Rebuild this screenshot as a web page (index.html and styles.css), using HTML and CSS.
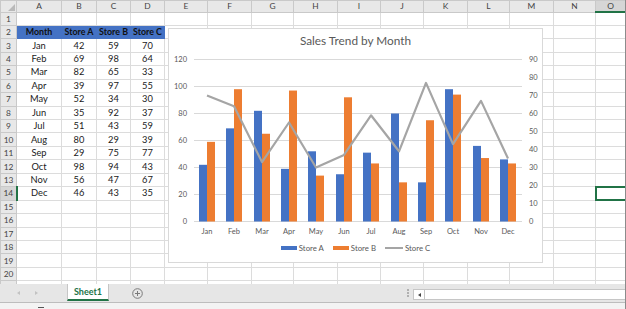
FILE: index.html
```html
<!DOCTYPE html>
<html lang="en">
<head>
    <title>Sales Trend by Month</title>
    <meta charset="utf-8">
    <link rel="stylesheet" href="styles.css">
</head>
<body>

    <div class="sheet">
        <div class="grid-wrap">
            <table class="grid">
                <colgroup>
                    <col class="col-head"><col class="col-a"><col class="col-b"><col class="col-c"><col class="col-d">
                    <col class="col-e"><col class="col-f"><col class="col-g"><col class="col-h"><col class="col-i">
                    <col class="col-j"><col class="col-k"><col class="col-l"><col class="col-m"><col class="col-n"><col class="col-o">
                </colgroup>
                <tr class="colhead">
                    <th class="corner"></th><th>A</th><th>B</th><th>C</th><th>D</th><th>E</th><th>F</th><th>G</th><th>H</th><th>I</th><th>J</th><th>K</th><th>L</th><th>M</th><th>N</th><th class="sel-col">O</th>
                </tr>
                <tr><th>1</th><td></td><td></td><td></td><td></td><td></td><td></td><td></td><td></td><td></td><td></td><td></td><td></td><td></td><td></td><td></td></tr>
                <tr><th>2</th><td class="hd">Month</td><td class="hd">Store A</td><td class="hd">Store B</td><td class="hd">Store C</td><td></td><td></td><td></td><td></td><td></td><td></td><td></td><td></td><td></td><td></td><td></td></tr>
                <tr><th>3</th><td>Jan</td><td>42</td><td>59</td><td>70</td><td></td><td></td><td></td><td></td><td></td><td></td><td></td><td></td><td></td><td></td><td></td></tr>
                <tr><th>4</th><td>Feb</td><td>69</td><td>98</td><td>64</td><td></td><td></td><td></td><td></td><td></td><td></td><td></td><td></td><td></td><td></td><td></td></tr>
                <tr><th>5</th><td>Mar</td><td>82</td><td>65</td><td>33</td><td></td><td></td><td></td><td></td><td></td><td></td><td></td><td></td><td></td><td></td><td></td></tr>
                <tr><th>6</th><td>Apr</td><td>39</td><td>97</td><td>55</td><td></td><td></td><td></td><td></td><td></td><td></td><td></td><td></td><td></td><td></td><td></td></tr>
                <tr><th>7</th><td>May</td><td>52</td><td>34</td><td>30</td><td></td><td></td><td></td><td></td><td></td><td></td><td></td><td></td><td></td><td></td><td></td></tr>
                <tr><th>8</th><td>Jun</td><td>35</td><td>92</td><td>37</td><td></td><td></td><td></td><td></td><td></td><td></td><td></td><td></td><td></td><td></td><td></td></tr>
                <tr><th>9</th><td>Jul</td><td>51</td><td>43</td><td>59</td><td></td><td></td><td></td><td></td><td></td><td></td><td></td><td></td><td></td><td></td><td></td></tr>
                <tr><th>10</th><td>Aug</td><td>80</td><td>29</td><td>39</td><td></td><td></td><td></td><td></td><td></td><td></td><td></td><td></td><td></td><td></td><td></td></tr>
                <tr><th>11</th><td>Sep</td><td>29</td><td>75</td><td>77</td><td></td><td></td><td></td><td></td><td></td><td></td><td></td><td></td><td></td><td></td><td></td></tr>
                <tr><th>12</th><td>Oct</td><td>98</td><td>94</td><td>43</td><td></td><td></td><td></td><td></td><td></td><td></td><td></td><td></td><td></td><td></td><td></td></tr>
                <tr><th>13</th><td>Nov</td><td>56</td><td>47</td><td>67</td><td></td><td></td><td></td><td></td><td></td><td></td><td></td><td></td><td></td><td></td><td></td></tr>
                <tr><th class="sel-row">14</th><td>Dec</td><td>46</td><td>43</td><td>35</td><td></td><td></td><td></td><td></td><td></td><td></td><td></td><td></td><td></td><td></td><td class="active"></td></tr>
                <tr><th>15</th><td></td><td></td><td></td><td></td><td></td><td></td><td></td><td></td><td></td><td></td><td></td><td></td><td></td><td></td><td></td></tr>
                <tr><th>16</th><td></td><td></td><td></td><td></td><td></td><td></td><td></td><td></td><td></td><td></td><td></td><td></td><td></td><td></td><td></td></tr>
                <tr><th>17</th><td></td><td></td><td></td><td></td><td></td><td></td><td></td><td></td><td></td><td></td><td></td><td></td><td></td><td></td><td></td></tr>
                <tr><th>18</th><td></td><td></td><td></td><td></td><td></td><td></td><td></td><td></td><td></td><td></td><td></td><td></td><td></td><td></td><td></td></tr>
                <tr><th>19</th><td></td><td></td><td></td><td></td><td></td><td></td><td></td><td></td><td></td><td></td><td></td><td></td><td></td><td></td><td></td></tr>
                <tr><th>20</th><td></td><td></td><td></td><td></td><td></td><td></td><td></td><td></td><td></td><td></td><td></td><td></td><td></td><td></td><td></td></tr>
                <tr><th></th><td></td><td></td><td></td><td></td><td></td><td></td><td></td><td></td><td></td><td></td><td></td><td></td><td></td><td></td><td></td></tr>
            </table>
        </div>

        <!-- embedded chart object, floats over the cells -->
        <div class="chart">
            <div class="chart-title">Sales Trend by Month</div>
            <svg class="plot" width="373" height="190" viewBox="0 0 373 190">
                <g class="gridlines">
                    <line x1="25" y1="8.5" x2="353" y2="8.5"/>
                    <line x1="25" y1="35.5" x2="353" y2="35.5"/>
                    <line x1="25" y1="62.5" x2="353" y2="62.5"/>
                    <line x1="25" y1="89.5" x2="353" y2="89.5"/>
                    <line x1="25" y1="116.5" x2="353" y2="116.5"/>
                    <line x1="25" y1="143.5" x2="353" y2="143.5"/>
                    <line x1="25" y1="170.5" x2="353" y2="170.5"/>
                </g>
                <g class="axis-left">
                    <text x="18" y="11.2">120</text>
                    <text x="18" y="38.2">100</text>
                    <text x="18" y="65.2">80</text>
                    <text x="18" y="92.2">60</text>
                    <text x="18" y="119.2">40</text>
                    <text x="18" y="146.2">20</text>
                    <text x="18" y="173.2">0</text>
                </g>
                <g class="axis-right">
                    <text x="360" y="11.2">90</text>
                    <text x="360" y="29.2">80</text>
                    <text x="360" y="47.2">70</text>
                    <text x="360" y="65.2">60</text>
                    <text x="360" y="83.2">50</text>
                    <text x="360" y="101.2">40</text>
                    <text x="360" y="119.2">30</text>
                    <text x="360" y="137.2">20</text>
                    <text x="360" y="155.2">10</text>
                    <text x="360" y="173.2">0</text>
                </g>
                <g class="bars-a">
                    <rect x="30" y="113.8" width="8" height="56.7"/>
                    <rect x="57" y="77.35" width="8" height="93.15"/>
                    <rect x="85" y="59.8" width="8" height="110.7"/>
                    <rect x="112" y="117.85" width="8" height="52.65"/>
                    <rect x="139" y="100.3" width="8" height="70.2"/>
                    <rect x="167" y="123.25" width="8" height="47.25"/>
                    <rect x="194" y="101.65" width="8" height="68.85"/>
                    <rect x="222" y="62.5" width="8" height="108"/>
                    <rect x="249" y="131.35" width="8" height="39.15"/>
                    <rect x="276" y="38.2" width="8" height="132.3"/>
                    <rect x="304" y="94.9" width="8" height="75.6"/>
                    <rect x="331" y="108.4" width="8" height="62.1"/>
                </g>
                <g class="bars-b">
                    <rect x="38" y="90.85" width="8" height="79.65"/>
                    <rect x="65" y="38.2" width="8" height="132.3"/>
                    <rect x="93" y="82.75" width="8" height="87.75"/>
                    <rect x="120" y="39.55" width="8" height="130.95"/>
                    <rect x="147" y="124.6" width="8" height="45.9"/>
                    <rect x="175" y="46.3" width="8" height="124.2"/>
                    <rect x="202" y="112.45" width="8" height="58.05"/>
                    <rect x="230" y="131.35" width="8" height="39.15"/>
                    <rect x="257" y="69.25" width="8" height="101.25"/>
                    <rect x="284" y="43.6" width="8" height="126.9"/>
                    <rect x="312" y="107.05" width="8" height="63.45"/>
                    <rect x="339" y="112.45" width="8" height="58.05"/>
                </g>
                <polyline class="line-c" points="38,44.5 65,55.3 93,111.1 120,71.5 147,116.5 175,103.9 202,64.3 230,100.3 257,31.9 284,93.1 312,49.9 339,107.5"/>
                <g class="axis-months">
                    <text x="38" y="182.7">Jan</text>
                    <text x="65" y="182.7">Feb</text>
                    <text x="93" y="182.7">Mar</text>
                    <text x="120" y="182.7">Apr</text>
                    <text x="147" y="182.7">May</text>
                    <text x="175" y="182.7">Jun</text>
                    <text x="202" y="182.7">Jul</text>
                    <text x="230" y="182.7">Aug</text>
                    <text x="257" y="182.7">Sep</text>
                    <text x="284" y="182.7">Oct</text>
                    <text x="312" y="182.7">Nov</text>
                    <text x="339" y="182.7">Dec</text>
                </g>
            </svg>
            <div class="legend">
                <div class="legend-item"><span class="swatch swatch-a"></span>Store A</div>
                <div class="legend-item"><span class="swatch swatch-b"></span>Store B</div>
                <div class="legend-item"><span class="swatch swatch-c"></span>Store C</div>
            </div>
        </div>

        <div class="tabbar">
            <div class="tab-nav">
                <span class="arrow arrow-left"></span>
                <span class="arrow arrow-right"></span>
            </div>
            <div class="tab active-tab">Sheet1</div>
            <div class="add-sheet">
                <svg width="11" height="11" viewBox="0 0 11 11">
                    <circle cx="5.5" cy="5.5" r="4.8" fill="none" stroke="#7a7a7a" stroke-width="1"/>
                    <path d="M5.5 3v5M3 5.5h5" stroke="#7a7a7a" stroke-width="1"/>
                </svg>
            </div>
            <div class="tab-space"></div>
            <div class="splitter"><span></span><span></span><span></span></div>
            <div class="hscroll">
                <span class="hscroll-btn"><span class="mini-tri"></span></span>
            </div>
        </div>
        <div class="statusbar"><span class="status-dash"></span></div>
    </div>

</body>
</html>
```

FILE: styles.css
```css
/* spreadsheet window */
body {
    margin: 0;
    background: #fff;
    font-family: Lato, "Liberation Sans", sans-serif;
}
.sheet {
    position: relative;
    width: 625px;
    height: 309px;
    border-right: 1px solid #8c8c8c;
    overflow: hidden;
}
.grid-wrap {
    height: 284px;
    overflow: hidden;
}
.grid {
    border-collapse: collapse;
    table-layout: fixed;
    width: 625px;
}
.col-head { width: 16px; }
.col-a { width: 45px; }
.col-b { width: 35px; }
.col-c { width: 34px; }
.col-d { width: 34px; }
.col-e { width: 43px; }
.col-f { width: 44px; }
.col-g { width: 42px; }
.col-h { width: 44px; }
.col-i { width: 43px; }
.col-j { width: 43px; }
.col-k { width: 44px; }
.col-l { width: 42px; }
.col-m { width: 44px; }
.col-n { width: 42px; }
.col-o { width: 30px; }

.grid tr {
    height: 13.45px;
}
.grid tr.colhead {
    height: 11px;
}
.grid td,
.grid th {
    padding: 0;
    border: 1px solid #dcdcdc;
    font-size: 9.3px;
    line-height: 10px;
    text-align: center;
    white-space: nowrap;
    overflow: hidden;
    color: #1a1a1a;
}
.grid th {
    background: #e8e8e8;
    border-color: #c9c9c9;
    font-weight: normal;
    font-size: 8.4px;
    color: #444;
}
.grid th.corner {
    position: relative;
}
.grid th.corner::after {
    content: "";
    position: absolute;
    right: 1px;
    bottom: 1px;
    border-left: 7px solid transparent;
    border-bottom: 7px solid #b9b9b9;
}
.grid th.sel-col {
    background: #d6d6d6;
    border-bottom: 2px solid #217346;
}
.grid th.sel-row {
    background: #d6d6d6;
    border-right: 2px solid #217346;
}
.grid td.hd {
    background: #4472c4;
    border-color: #4472c4;
    font-size: 8.9px;
    font-weight: bold;
    color: #111;
}
.grid td.active {
    border: 2px solid #217346;
}

/* chart */
.chart {
    position: absolute;
    left: 168px;
    top: 28px;
    width: 375px;
    height: 235px;
    box-sizing: border-box;
    border: 1px solid #d9d9d9;
    background: #fff;
    display: flex;
    flex-direction: column;
}
.chart-title {
    height: 22px;
    box-sizing: border-box;
    padding-top: 5px;
    text-align: center;
    font-size: 11.8px;
    line-height: 14px;
    color: #595959;
}
.plot {
    display: block;
}
.plot text {
    font-family: Lato, "Liberation Sans", sans-serif;
    font-size: 7.5px;
    fill: #595959;
}
.gridlines line {
    stroke: #d9d9d9;
    stroke-width: 1;
}
.axis-left text { text-anchor: end; }
.axis-right text { text-anchor: start; }
.axis-months text { text-anchor: middle; }
.bars-a rect { fill: #4472c4; }
.bars-b rect { fill: #ed7d31; }
.line-c {
    fill: none;
    stroke: #a5a5a5;
    stroke-width: 2.2;
    stroke-linejoin: round;
}
.legend {
    height: 14px;
    display: flex;
    justify-content: center;
    align-items: center;
    gap: 9px;
    font-size: 7.8px;
    color: #595959;
}
.legend-item {
    display: flex;
    align-items: center;
}
.swatch {
    display: inline-block;
    width: 16px;
    height: 4px;
    margin-right: 2px;
}
.swatch-a { background: #4472c4; }
.swatch-b { background: #ed7d31; }
.swatch-c {
    width: 18px;
    height: 2px;
    background: #a5a5a5;
}

/* sheet tabs */
.tabbar {
    height: 18px;
    display: flex;
    background: #e6e6e6;
}
.tab-nav {
    width: 67px;
    display: flex;
    align-items: center;
}
.arrow {
    width: 0;
    height: 0;
    border-top: 2.5px solid transparent;
    border-bottom: 2.5px solid transparent;
}
.arrow-left {
    margin-left: 17px;
    border-right: 3px solid #c2c2c2;
}
.arrow-right {
    margin-left: 15px;
    border-left: 3px solid #c2c2c2;
}
.tab {
    width: 42px;
    height: 17px;
    box-sizing: border-box;
    background: #fff;
    border-left: 1px solid #c6c6c6;
    border-right: 1px solid #c6c6c6;
    border-bottom: 2px solid #217346;
    font-size: 9px;
    font-weight: bold;
    line-height: 15px;
    text-align: center;
    color: #217346;
}
.add-sheet {
    margin-left: 23px;
    display: flex;
    align-items: center;
}
.add-sheet svg {
    display: block;
}
.tab-space {
    flex: 1;
}
.splitter {
    width: 11px;
    display: flex;
    flex-direction: column;
    align-items: center;
    justify-content: center;
    gap: 1px;
}
.splitter span {
    width: 2px;
    height: 2px;
    background: #b0b0b0;
}
.hscroll {
    width: 212px;
    height: 11px;
    margin-top: 5px;
    box-sizing: border-box;
    background: #fff;
    border: 1px solid #c6c6c6;
    border-right: none;
    display: flex;
}
.hscroll-btn {
    width: 10px;
    border-right: 1px solid #c6c6c6;
    display: flex;
    align-items: center;
    justify-content: center;
}
.mini-tri {
    width: 0;
    height: 0;
    border-top: 2px solid transparent;
    border-bottom: 2px solid transparent;
    border-right: 3px solid #444;
}
.statusbar {
    height: 7px;
    box-sizing: border-box;
    border-top: 1px solid #bdbdbd;
    background: #f3f3f3;
    position: relative;
}
.status-dash {
    position: absolute;
    left: 38px;
    top: 4px;
    width: 6px;
    height: 1px;
    background: #555;
}
```
